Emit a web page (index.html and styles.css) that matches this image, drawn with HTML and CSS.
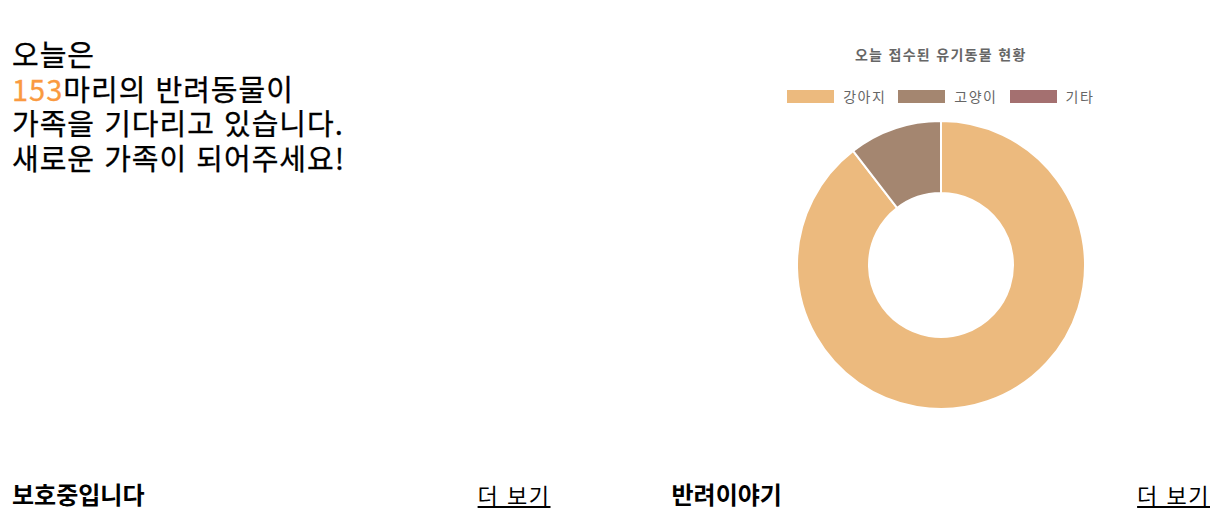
FILE: index.html
```html
<!DOCTYPE html>
<html lang="ko">
<head>
<meta charset="utf-8">
<title>유기동물</title>
<link rel="stylesheet" href="styles.css">
</head>
<body>
<div class="page">
  <section class="hero">
    <div class="intro">
      <p class="headline">오늘은<br><span class="count">153</span>마리의 반려동물이<br>가족을 기다리고 있습니다.<br>새로운 가족이 되어주세요!</p>
    </div>
    <div class="chart">
      <div class="chart-title">오늘 접수된 유기동물 현황</div>
      <ul class="legend">
        <li class="legend-item"><span class="swatch swatch-dog"></span>강아지</li>
        <li class="legend-item"><span class="swatch swatch-cat"></span>고양이</li>
        <li class="legend-item"><span class="swatch swatch-etc"></span>기타</li>
      </ul>
      <svg class="donut" width="290" height="290" viewBox="0 0 290 290">
        <path d="M145 1 A144 144 0 1 1 57.06 30.97 L101.03 87.98 A72 72 0 1 0 145 73 Z" fill="#ECBA7E" stroke="#ffffff" stroke-width="2" stroke-linejoin="round"/>
        <path d="M57.06 30.97 A144 144 0 0 1 145 1 L145 73 A72 72 0 0 0 101.03 87.98 Z" fill="#A48670" stroke="#ffffff" stroke-width="2" stroke-linejoin="round"/>
      </svg>
    </div>
  </section>
  <section class="lists">
    <div class="list-head">
      <h2 class="list-title">보호중입니다</h2>
      <a class="more" href="#">더 보기</a>
    </div>
    <div class="list-head">
      <h2 class="list-title">반려이야기</h2>
      <a class="more" href="#">더 보기</a>
    </div>
  </section>
</div>
</body>
</html>
```

FILE: styles.css
```css
html, body {
  margin: 0;
  padding: 0;
  background: #ffffff;
}

body {
  font-family: "Noto Sans CJK KR", "Noto Sans", sans-serif;
  color: #000000;
}

.page {
  padding: 0 15px 0 12px;
}

.hero {
  display: grid;
  grid-template-columns: 1fr 1fr;
  column-gap: 121px;
  height: 477px;
}

.intro {
  padding-top: 36px;
}

.headline {
  margin: 0;
  font-size: 29px;
  line-height: 34.5px;
  font-weight: 400;
  letter-spacing: 1px;
  -webkit-text-stroke: 0.3px #000000;
}

.count {
  color: #FA9A40;
  -webkit-text-stroke: 0.3px #FA9A40;
}

.chart {
  display: flex;
  flex-direction: column;
  align-items: center;
  padding-top: 44px;
}

.chart-title {
  font-size: 14px;
  line-height: 20px;
  font-weight: 700;
  color: #666666;
  letter-spacing: 1.3px;
}

.legend {
  display: flex;
  gap: 12px;
  list-style: none;
  margin: 25px 0 0 0;
  padding: 0;
}

.legend-item {
  display: flex;
  align-items: center;
  gap: 9px;
  font-size: 14px;
  line-height: 14px;
  color: #666666;
  letter-spacing: 1.5px;
}

.swatch {
  display: block;
  width: 47px;
  height: 13px;
}

.swatch-dog { background: #ECBA7E; }
.swatch-cat { background: #A48670; }
.swatch-etc { background: #A47070; }

.donut {
  display: block;
  margin-top: 17px;
}

.lists {
  display: grid;
  grid-template-columns: 1fr 1fr;
  column-gap: 121px;
}

.list-head {
  display: flex;
  justify-content: space-between;
  align-items: baseline;
}

.list-title {
  margin: 0;
  font-size: 24px;
  line-height: 34px;
  font-weight: 700;
  letter-spacing: 0;
}

.more {
  font-size: 22px;
  color: #000000;
  text-decoration: underline;
  letter-spacing: 1.5px;
}
```
